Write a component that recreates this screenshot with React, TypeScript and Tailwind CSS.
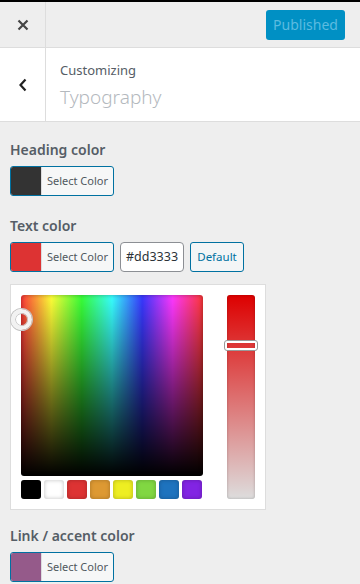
import React from "react";

const font = { fontFamily: '"Noto Sans", "Open Sans", sans-serif' };

function ColorButton({ color }: { color: string }) {
  return (
    <div className="flex h-[30px] w-[104px] overflow-hidden rounded-[3px] border border-[#0071a1] bg-[#f6f7f7]">
      <div className="h-full w-[30px] shrink-0" style={{ backgroundColor: color }} />
      <div className="flex flex-1 items-center justify-center border-l border-[#dcdcde] text-[11px] text-[#50575e]">
        Select Color
      </div>
    </div>
  );
}

const swatches = ["#000000", "#ffffff", "#dd3333", "#dd9933", "#eeee22", "#81d742", "#1e73be", "#8224e3"];

export default function App() {
  return (
    <div className="h-[584px] w-[360px] overflow-hidden bg-[#eeeeee]" style={font}>
      <div className="h-[2px] bg-black" />
      {/* top bar */}
      <div className="flex h-[46px] items-center border-b border-[#dddddd] bg-[#eeeeee]">
        <div className="flex h-full w-[46px] items-center justify-center border-r border-[#dddddd]">
          <svg width="12" height="12" viewBox="0 0 12 12">
            <path d="M1.5 1.5 L10.5 10.5 M10.5 1.5 L1.5 10.5" stroke="#444" strokeWidth="2.2" strokeLinecap="butt" />
          </svg>
        </div>
        <div className="flex-1" />
        <div className="mr-[15px] flex h-[30px] w-[79px] items-center justify-center rounded-[3px] bg-[#0090c4] text-[14px] text-[#5cbbe0]">
          Published
        </div>
      </div>
      {/* header */}
      <div className="flex h-[74px] border-b border-[#dddddd] bg-white">
        <div className="flex w-[46px] items-center justify-center border-r border-[#dddddd]">
          <svg width="10" height="14" viewBox="0 0 10 14">
            <path d="M7.5 1.5 L2.5 7 L7.5 12.5" fill="none" stroke="#222" strokeWidth="2.2" />
          </svg>
        </div>
        <div className="flex flex-col pl-[14px] pt-[13px]">
          <div className="text-[13px] leading-[18px] text-[#555d66]">Customizing</div>
          <div className="mt-[5px] text-[19px] font-light leading-[26px] text-[#b4b9be]">Typography</div>
        </div>
      </div>
      {/* body */}
      <div className="px-[10px] pt-[16px]">
        <div className="text-[14px] font-semibold leading-[24px] text-[#555d66]">Heading color</div>
        <div className="mt-[4px]">
          <ColorButton color="#333333" />
        </div>

        <div className="mt-[18px] text-[14px] font-semibold leading-[24px] text-[#555d66]">Text color</div>
        <div className="mt-[4px] flex items-center gap-[6px]">
          <ColorButton color="#dd3333" />
          <div className="flex h-[30px] w-[64px] items-center overflow-hidden rounded-[4px] border border-[#8c8f94] bg-white pl-[5px] text-[12.5px] text-[#2c3338]">
            #dd3333
          </div>
          <div className="flex h-[30px] w-[54px] items-center justify-center rounded-[3px] border border-[#0071a1] bg-[#f3f5f6] text-[11.5px] text-[#0071a1]">
            Default
          </div>
        </div>

        {/* picker */}
        <div className="mt-[12px] flex h-[226px] w-[256px] justify-between border border-[#dddddd] bg-white p-[10px]">
          <div className="flex flex-col">
            <div className="relative h-[182px] w-[182px]">
              <div
                className="absolute inset-0 rounded-[3px]"
                style={{
                  background:
                    "linear-gradient(to bottom, rgba(0,0,0,0), #000), linear-gradient(rgba(255,255,255,0.22), rgba(255,255,255,0.22)), linear-gradient(to right, #f00, #ff0, #0f0, #0ff, #00f, #f0f, #f00)",
                  boxShadow: "inset 0 0 4px rgba(0,0,0,0.35)",
                }}
              />
              <div className="absolute left-[-10px] top-[14px] h-[21px] w-[21px] rounded-full border-[4px] border-[#f2f2f2] shadow-[0_0_0_1px_#c4c4c4,inset_0_0_0_1px_#c4c4c4]" />
            </div>
            <div className="mt-[4px] flex gap-[3px]">
              {swatches.map((c) => (
                <div
                  key={c}
                  className="h-[19px] w-[20px] rounded-[3px] shadow-[inset_0_0_4px_rgba(0,0,0,0.25)]"
                  style={{ backgroundColor: c }}
                />
              ))}
            </div>
          </div>
          <div className="relative h-[204px] w-[28px]">
            <div
              className="absolute inset-0 rounded-[3px]"
              style={{
                background: "linear-gradient(to bottom, #dd0000, #dddddd)",
                boxShadow: "inset 0 0 3px rgba(0,0,0,0.25)",
              }}
            />
            <div className="absolute left-[-3px] right-[-3px] top-[45px] h-[11px] rounded-[3px] border border-[#999999] shadow-[inset_0_0_0_2px_#ffffff]" />
          </div>
        </div>

        <div className="mt-[14px] text-[14px] font-semibold leading-[24px] text-[#555d66]">Link / accent color</div>
        <div className="mt-[4px]">
          <ColorButton color="#955a8a" />
        </div>
      </div>
    </div>
  );
}
